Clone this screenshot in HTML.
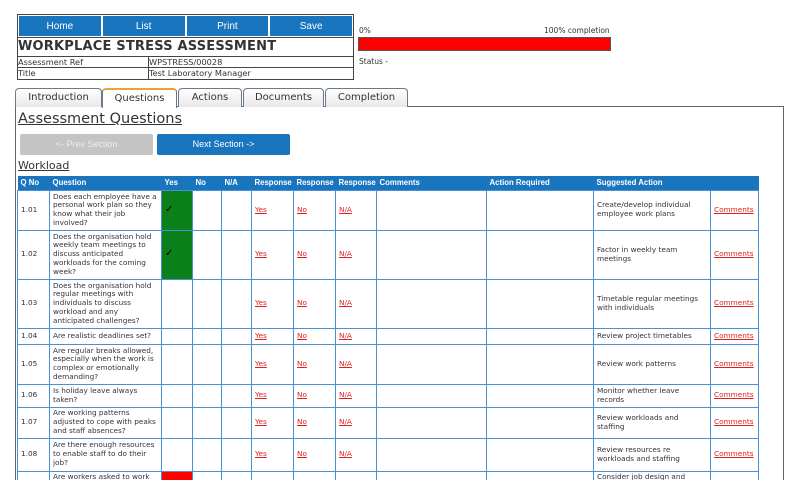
<!DOCTYPE html>
<html><head><style>
*{margin:0;padding:0;box-sizing:border-box}
html,body{width:800px;height:480px;overflow:hidden}
body{background:#fff;font-family:"DejaVu Sans",Verdana,sans-serif;color:#333;position:relative}
.abs{position:absolute}
.hdr{left:17px;top:14px;width:337px;border:1px solid #444}
.btns{display:flex;height:23px;border-bottom:1px solid #444}
.btns div{flex:1;background:#1a75bf;color:#fff;font-family:"Liberation Sans",sans-serif;font-size:10px;text-align:center;line-height:21px;border:1px solid #fff}
.ttl{font-family:"DejaVu Sans",sans-serif;font-weight:bold;font-size:13px;height:19px;line-height:18px;border-bottom:1px solid #444;color:#333;letter-spacing:0.2px}
.kv{display:flex;height:11px;font-size:8.2px;line-height:10px;border-bottom:1px solid #444;white-space:nowrap}
.kv:last-child{border-bottom:none}
.kv div:first-child{width:131px;border-right:1px solid #444}
.tab{top:88px;height:19px;border:1px solid #6a7a8a;border-bottom:none;border-radius:4px 4px 0 0;background:linear-gradient(#fff,#e8e8e8);font-family:"DejaVu Sans",sans-serif;font-size:10px;text-align:center;line-height:18px;color:#333}
.box{left:15px;top:106px;width:769px;height:374px;border:1px solid #666;border-bottom:none}
table{border-collapse:collapse;position:absolute;left:17px;top:176px;width:741px;table-layout:fixed;font-size:7.3px}
th{background:#1a75bf;color:#fff;text-align:left;font-weight:bold;height:14px;padding:0 3px;font-family:"Liberation Sans",sans-serif;font-size:7.8px;border:none;white-space:nowrap;overflow:hidden}
td{border:1px solid #4a90d9;padding:0 3px;vertical-align:middle;line-height:8.7px;overflow:hidden}
a{color:#e02020;text-decoration:underline}
.g{background:#0a7f1a;color:#000;font-size:10px}
.r{background:#f00}
.last td{border-bottom:none;vertical-align:top;padding-top:1px;white-space:nowrap;line-height:8px;height:9px}
</style></head><body>
<div class="abs hdr">
<div class="btns"><div>Home</div><div>List</div><div>Print</div><div>Save</div></div>
<div class="ttl">WORKPLACE STRESS ASSESSMENT</div>
<div class="kv"><div>Assessment Ref</div><div>WPSTRESS/00028</div></div>
<div class="kv"><div>Title</div><div>Test Laboratory Manager</div></div>
</div>
<div class="abs" style="left:359px;top:26px;font-size:7.5px">0%</div>
<div class="abs" style="left:544px;top:26px;font-size:7.5px">100% completion</div>
<div class="abs" style="left:358px;top:37px;width:253px;height:14px;background:#f00;border:1px solid #555"></div>
<div class="abs" style="left:359px;top:57px;font-size:7.5px">Status -</div>
<div class="abs box"></div>
<div class="abs tab" style="left:15px;width:87px">Introduction</div>
<div class="abs tab" style="left:102px;width:75px;background:#fff;border-top:2px solid #f0a030;height:20px">Questions</div>
<div class="abs tab" style="left:178px;width:64px">Actions</div>
<div class="abs tab" style="left:243px;width:81px">Documents</div>
<div class="abs tab" style="left:325px;width:83px">Completion</div>
<div class="abs" style="left:18px;top:111px;font-size:14.5px;text-decoration:underline;font-family:'DejaVu Sans',sans-serif">Assessment Questions</div>
<div class="abs" style="left:20px;top:134px;width:133px;height:21px;background:#c4c4c4;border-radius:2px;color:#eee;font-family:'Liberation Sans',sans-serif;font-size:9px;text-align:center;line-height:21px">&lt;- Prev Section</div>
<div class="abs" style="left:157px;top:134px;width:133px;height:21px;background:#1a75bf;border-radius:2px;color:#fff;font-family:'Liberation Sans',sans-serif;font-size:9px;text-align:center;line-height:21px">Next Section -&gt;</div>
<div class="abs" style="left:18px;top:159px;font-size:11px;text-decoration:underline">Workload</div>
<table>
<colgroup><col style="width:32px"><col style="width:112px"><col style="width:31px"><col style="width:29px"><col style="width:30px"><col style="width:42px"><col style="width:42px"><col style="width:41px"><col style="width:110px"><col style="width:107px"><col style="width:117px"><col style="width:48px"></colgroup>
<tr><th>Q No</th><th>Question</th><th>Yes</th><th>No</th><th>N/A</th><th>Response</th><th>Response</th><th>Response</th><th>Comments</th><th>Action Required</th><th>Suggested Action</th><th></th></tr>
<tr style="height:40px"><td>1.01</td><td>Does each employee have a personal work plan so they know what their job involved?</td><td class="g">✓</td><td></td><td></td><td><a>Yes</a></td><td><a>No</a></td><td><a>N/A</a></td><td></td><td></td><td>Create/develop individual employee work plans</td><td><a>Comments</a></td></tr>
<tr style="height:49px"><td>1.02</td><td>Does the organisation hold weekly team meetings to discuss anticipated workloads for the coming week?</td><td class="g">✓</td><td></td><td></td><td><a>Yes</a></td><td><a>No</a></td><td><a>N/A</a></td><td></td><td></td><td>Factor in weekly team meetings</td><td><a>Comments</a></td></tr>
<tr style="height:49px"><td>1.03</td><td>Does the organisation hold regular meetings with individuals to discuss workload and any anticipated challenges?</td><td></td><td></td><td></td><td><a>Yes</a></td><td><a>No</a></td><td><a>N/A</a></td><td></td><td></td><td>Timetable regular meetings with individuals</td><td><a>Comments</a></td></tr>
<tr style="height:16px"><td>1.04</td><td>Are realistic deadlines set?</td><td></td><td></td><td></td><td><a>Yes</a></td><td><a>No</a></td><td><a>N/A</a></td><td></td><td></td><td>Review project timetables</td><td><a>Comments</a></td></tr>
<tr style="height:40px"><td>1.05</td><td>Are regular breaks allowed, especially when the work is complex or emotionally demanding?</td><td></td><td></td><td></td><td><a>Yes</a></td><td><a>No</a></td><td><a>N/A</a></td><td></td><td></td><td>Review work patterns</td><td><a>Comments</a></td></tr>
<tr style="height:23px"><td>1.06</td><td>Is holiday leave always taken?</td><td></td><td></td><td></td><td><a>Yes</a></td><td><a>No</a></td><td><a>N/A</a></td><td></td><td></td><td>Monitor whether leave records</td><td><a>Comments</a></td></tr>
<tr style="height:31px"><td>1.07</td><td>Are working patterns adjusted to cope with peaks and staff absences?</td><td></td><td></td><td></td><td><a>Yes</a></td><td><a>No</a></td><td><a>N/A</a></td><td></td><td></td><td>Review workloads and staffing</td><td><a>Comments</a></td></tr>
<tr style="height:33px"><td>1.08</td><td>Are there enough resources to enable staff to do their job?</td><td></td><td></td><td></td><td><a>Yes</a></td><td><a>No</a></td><td><a>N/A</a></td><td></td><td></td><td>Review resources re workloads and staffing</td><td><a>Comments</a></td></tr>
<tr class="last"><td></td><td>Are workers asked to work</td><td class="r"></td><td></td><td></td><td></td><td></td><td></td><td></td><td></td><td>Consider job design and</td><td></td></tr>
</table>
</body></html>
